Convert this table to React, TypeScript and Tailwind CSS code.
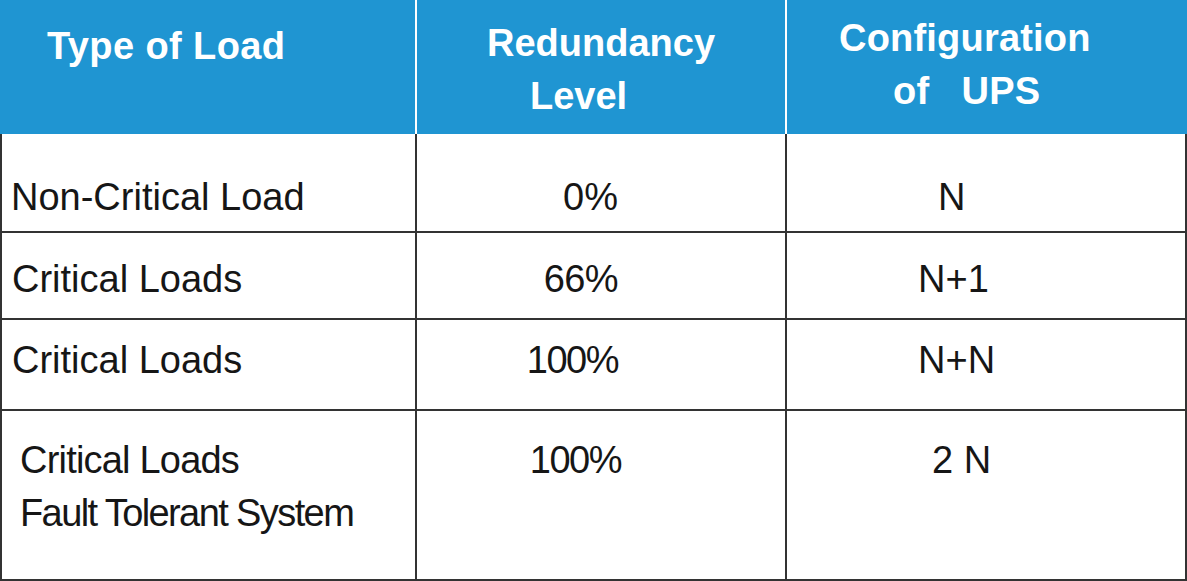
import React from "react";

const font = { fontFamily: '"Liberation Sans", Arial, sans-serif' };

export default function App() {
  const body = "text-[38px] leading-[53px] text-[#161616] whitespace-nowrap";
  return (
    <div className="w-[1187px] h-[581px] bg-white overflow-hidden" style={font}>
      <div className="grid grid-cols-[415px_370px_402px] grid-rows-[134px_99px_87px_91px_170px]">
        {/* header */}
        <div className="bg-[#1f95d2] pt-[20px] pl-[47px] text-white font-bold text-[38px] leading-[53px] tracking-[0.4px] whitespace-nowrap">
          Type of Load
        </div>
        <div className="bg-[#1f95d2] border-l-2 border-white pt-[17px] text-white font-bold text-[38px] leading-[53px] whitespace-nowrap">
          <div className="pl-[70px]">Redundancy</div>
          <div className="pl-[113px]">Level</div>
        </div>
        <div className="bg-[#1f95d2] border-l-2 border-white pt-[12px] text-white font-bold text-[38px] leading-[53px] tracking-[0.2px] whitespace-nowrap">
          <div className="pl-[52px]">Configuration</div>
          <div className="pl-[106px]">of&nbsp;&nbsp;&nbsp;UPS</div>
        </div>

        {/* row 1 */}
        <div className={`border-l-2 border-b-2 border-[#333] pt-[37px] pl-[9px] ${body}`}>Non-Critical Load</div>
        <div className={`border-l-2 border-b-2 border-[#333] pt-[37px] pr-[167px] text-right ${body}`}>0%</div>
        <div className={`border-l-2 border-r-2 border-b-2 border-[#333] pt-[37px] pl-[151px] ${body}`}>N</div>

        {/* row 2 */}
        <div className={`border-l-2 border-b-2 border-[#333] pt-[20px] pl-[10px] ${body}`}>Critical Loads</div>
        <div className={`border-l-2 border-b-2 border-[#333] pt-[20px] pr-[167px] text-right tracking-[-0.6px] ${body}`}>66%</div>
        <div className={`border-l-2 border-r-2 border-b-2 border-[#333] pt-[20px] pl-[131px] ${body}`}>N+1</div>

        {/* row 3 */}
        <div className={`border-l-2 border-b-2 border-[#333] pt-[14px] pl-[10px] ${body}`}>Critical Loads</div>
        <div className={`border-l-2 border-b-2 border-[#333] pt-[14px] pr-[167px] text-right tracking-[-1.5px] ${body}`}>100%</div>
        <div className={`border-l-2 border-r-2 border-b-2 border-[#333] pt-[14px] pl-[131px] ${body}`}>N+N</div>

        {/* row 4 */}
        <div className={`border-l-2 border-b-2 border-[#333] pt-[23px] pl-[18px] ${body}`}>
          <div className="tracking-[-0.8px]">Critical Loads</div>
          <div className="tracking-[-1.6px]">Fault Tolerant System</div>
        </div>
        <div className={`border-l-2 border-b-2 border-[#333] pt-[23px] pr-[164px] text-right tracking-[-1.5px] ${body}`}>100%</div>
        <div className={`border-l-2 border-r-2 border-b-2 border-[#333] pt-[23px] pl-[145px] ${body}`}>2 N</div>
      </div>
    </div>
  );
}
